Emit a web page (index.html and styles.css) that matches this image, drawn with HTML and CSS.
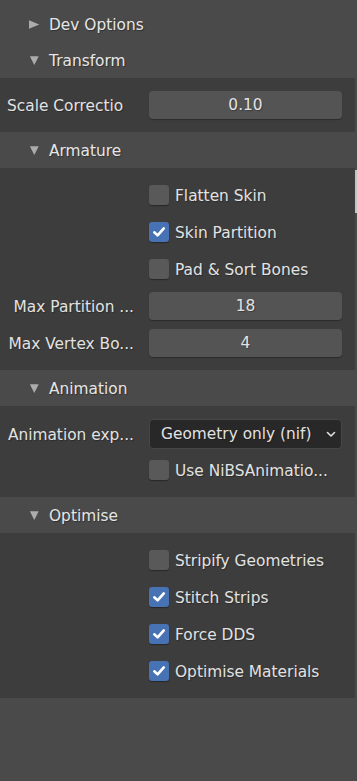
FILE: index.html
```html
<!DOCTYPE html>
<html lang="en">
<head>
  <meta charset="UTF-8" />
  <meta name="viewport" content="width=device-width, initial-scale=1" />
  <title>Export Options</title>
  <link rel="stylesheet" href="styles.css">
</head>
<body>

  <div class="sidebar">

    <div class="panel">
      <div class="panel-header">
        <svg class="arrow" width="11" height="11" viewBox="0 0 10 10"><path d="M0 1.2 L9.4 5 L0 8.8 Z" /></svg>
        <span>Dev Options</span>
      </div>
    </div>

    <div class="panel">
      <div class="panel-header">
        <svg class="arrow" width="11" height="11" viewBox="0 0 10 10"><path d="M0.8 1.2 L8.8 1.2 L4.8 9 Z" /></svg>
        <span>Transform</span>
      </div>
      <div class="panel-body">
        <div class="row">
          <div class="label clip">Scale Correctio</div>
          <div class="num-field">0.10</div>
        </div>
      </div>
    </div>

    <div class="panel">
      <div class="panel-header">
        <svg class="arrow" width="11" height="11" viewBox="0 0 10 10"><path d="M0.8 1.2 L8.8 1.2 L4.8 9 Z" /></svg>
        <span>Armature</span>
      </div>
      <div class="panel-body">
        <div class="row">
          <div class="label"></div>
          <label class="check"><span class="box"></span>Flatten Skin</label>
        </div>
        <div class="row">
          <div class="label"></div>
          <label class="check"><span class="box checked"><svg width="14" height="14" viewBox="0 0 14 14"><path d="M2.3 7.3 L5.6 10.4 L11.8 3.4" /></svg></span>Skin Partition</label>
        </div>
        <div class="row">
          <div class="label"></div>
          <label class="check"><span class="box"></span>Pad &amp; Sort Bones</label>
        </div>
        <div class="row">
          <div class="label">Max Partition ...</div>
          <div class="num-field">18</div>
        </div>
        <div class="row">
          <div class="label">Max Vertex Bo...</div>
          <div class="num-field">4</div>
        </div>
      </div>
    </div>

    <div class="panel">
      <div class="panel-header">
        <svg class="arrow" width="11" height="11" viewBox="0 0 10 10"><path d="M0.8 1.2 L8.8 1.2 L4.8 9 Z" /></svg>
        <span>Animation</span>
      </div>
      <div class="panel-body">
        <div class="row">
          <div class="label">Animation exp...</div>
          <div class="dropdown">
            <span>Geometry only (nif)</span>
            <svg width="10" height="7" viewBox="0 0 10 7"><path d="M1.5 1.5 L5 5 L8.5 1.5" /></svg>
          </div>
        </div>
        <div class="row">
          <div class="label"></div>
          <label class="check"><span class="box"></span>Use NiBSAnimatio...</label>
        </div>
      </div>
    </div>

    <div class="panel">
      <div class="panel-header">
        <svg class="arrow" width="11" height="11" viewBox="0 0 10 10"><path d="M0.8 1.2 L8.8 1.2 L4.8 9 Z" /></svg>
        <span>Optimise</span>
      </div>
      <div class="panel-body">
        <div class="row">
          <div class="label"></div>
          <label class="check"><span class="box"></span>Stripify Geometries</label>
        </div>
        <div class="row">
          <div class="label"></div>
          <label class="check"><span class="box checked"><svg width="14" height="14" viewBox="0 0 14 14"><path d="M2.3 7.3 L5.6 10.4 L11.8 3.4" /></svg></span>Stitch Strips</label>
        </div>
        <div class="row">
          <div class="label"></div>
          <label class="check"><span class="box checked"><svg width="14" height="14" viewBox="0 0 14 14"><path d="M2.3 7.3 L5.6 10.4 L11.8 3.4" /></svg></span>Force DDS</label>
        </div>
        <div class="row">
          <div class="label"></div>
          <label class="check"><span class="box checked"><svg width="14" height="14" viewBox="0 0 14 14"><path d="M2.3 7.3 L5.6 10.4 L11.8 3.4" /></svg></span>Optimise Materials</label>
        </div>
      </div>
    </div>

    <div class="scrollbar"></div>
  </div>

</body>
</html>
```

FILE: styles.css
```css
body {
  margin: 0;
  padding: 0;
  background: #4a4a4a;
  font-family: "DejaVu Sans", "Liberation Sans", sans-serif;
  font-size: 15.4px;
  color: #e2e2e2;
}

.sidebar {
  position: relative;
  width: 355px;
  padding-top: 6px;
  min-height: 775px;
}

.panel-header {
  height: 36px;
  display: flex;
  align-items: center;
  padding: 2px 0 0 29px;
  box-sizing: border-box;
  background: #4a4a4a;
  color: #e6e6e6;
  text-shadow: 1px 1px 1px rgba(0, 0, 0, 0.35);
}

.panel-header span {
  margin-left: 9px;
}

.arrow {
  flex-shrink: 0;
  fill: #acacac;
  margin-top: -1px;
}

.panel-body {
  background: #3d3d3d;
  padding: 13px 13px 13px 0;
  display: flex;
  flex-direction: column;
  gap: 9px;
}

.row {
  display: grid;
  grid-template-columns: 149px 193px;
  height: 28px;
  align-items: center;
  padding-top: 1px;
  box-sizing: border-box;
}

.label {
  text-align: right;
  padding-right: 15px;
  white-space: nowrap;
  overflow: hidden;
  text-shadow: 1px 1px 1px rgba(0, 0, 0, 0.3);
}

.label.clip {
  text-align: left;
  padding-left: 7px;
  padding-right: 0;
}

.num-field {
  height: 28px;
  line-height: 28px;
  margin-top: -1px;
  background: #545454;
  border-radius: 4px;
  text-align: center;
  box-shadow: 0 1px 1px rgba(0, 0, 0, 0.3);
  text-shadow: 1px 1px 1px rgba(0, 0, 0, 0.3);
}

.check {
  display: flex;
  align-items: center;
  gap: 6px;
  white-space: nowrap;
  text-shadow: 1px 1px 1px rgba(0, 0, 0, 0.3);
}

.box {
  width: 20px;
  height: 20px;
  margin-top: -1px;
  border-radius: 3px;
  background: #595959;
  box-shadow: 0 1px 1px rgba(0, 0, 0, 0.35);
  display: flex;
  align-items: center;
  justify-content: center;
}

.box.checked {
  background: #4772b3;
}

.box svg path {
  fill: none;
  stroke: #ffffff;
  stroke-width: 2.6;
  stroke-linecap: round;
  stroke-linejoin: round;
}

.dropdown {
  height: 28px;
  margin-top: -1px;
  background: #282828;
  border: 1px solid #474747;
  border-radius: 4px;
  display: flex;
  align-items: center;
  justify-content: space-between;
  padding: 0 5px 0 11px;
  text-shadow: 1px 1px 1px rgba(0, 0, 0, 0.3);
}

.dropdown svg path {
  fill: none;
  stroke: #e0e0e0;
  stroke-width: 1.6;
  stroke-linecap: round;
  stroke-linejoin: round;
}

.scrollbar {
  position: absolute;
  top: 170px;
  right: -2px;
  width: 2px;
  height: 43px;
  background: #c4c4c4;
}
```
